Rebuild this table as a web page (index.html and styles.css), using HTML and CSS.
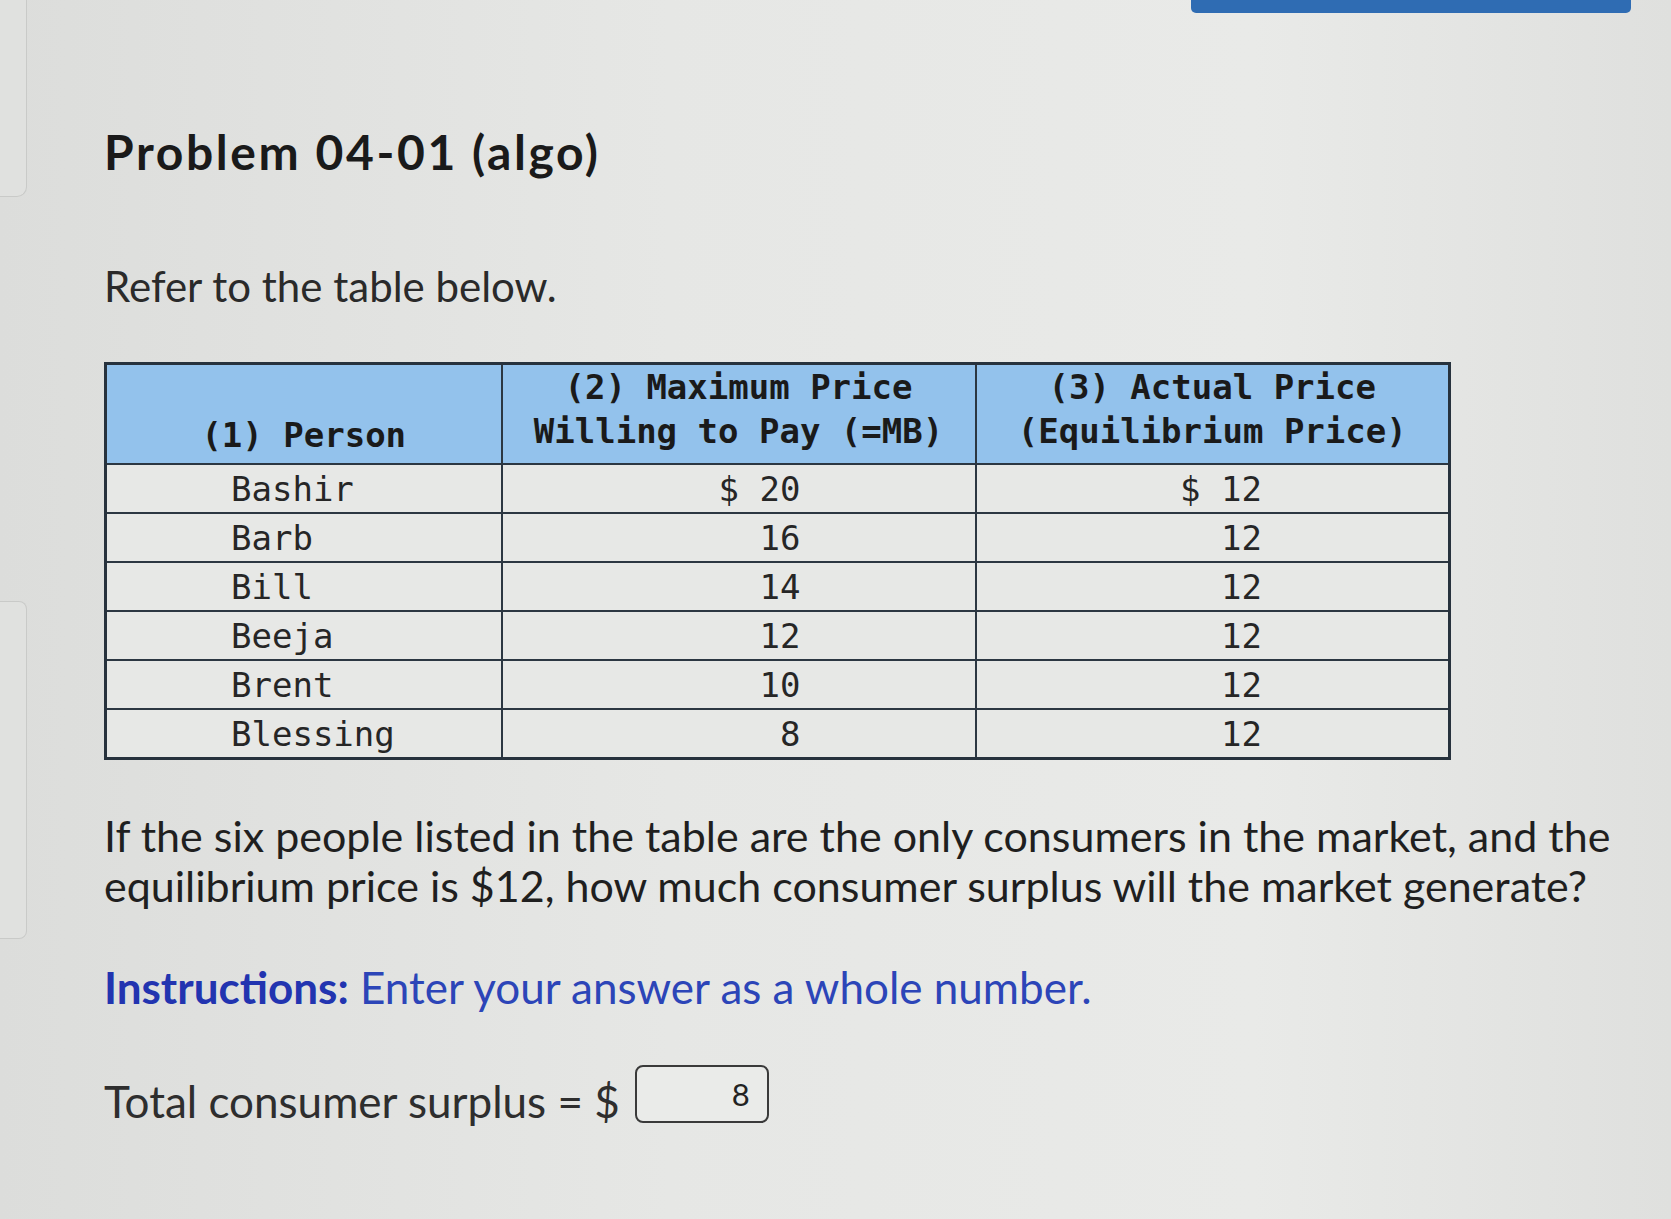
FILE: index.html
```html
<!DOCTYPE html>
<html lang="en">
<head>
<meta charset="utf-8">
<title>Problem 04-01 (algo)</title>
<link rel="stylesheet" href="styles.css">
</head>
<body>
<div class="page">
  <aside class="gutter">
    <div class="tab tab-top"></div>
    <div class="tab tab-mid"></div>
  </aside>
  <main class="content">
    <div class="topbar"><div class="bluebar"></div></div>
    <h1 class="title">Problem 04-01 (algo)</h1>
    <p class="lead">Refer to the table below.</p>
    <table class="data">
      <colgroup>
        <col class="c1"><col class="c2"><col class="c3">
      </colgroup>
      <thead>
        <tr>
          <th class="h1">(1) Person</th>
          <th class="h2">(2) Maximum Price<br>Willing to Pay (=MB)</th>
          <th class="h3">(3) Actual Price<br>(Equilibrium Price)</th>
        </tr>
      </thead>
      <tbody>
        <tr><td class="name">Bashir</td><td class="num n2">$ 20</td><td class="num n3">$ 12</td></tr>
        <tr><td class="name">Barb</td><td class="num n2">16</td><td class="num n3">12</td></tr>
        <tr><td class="name">Bill</td><td class="num n2">14</td><td class="num n3">12</td></tr>
        <tr><td class="name">Beeja</td><td class="num n2">12</td><td class="num n3">12</td></tr>
        <tr><td class="name">Brent</td><td class="num n2">10</td><td class="num n3">12</td></tr>
        <tr><td class="name">Blessing</td><td class="num n2">8</td><td class="num n3">12</td></tr>
      </tbody>
    </table>
    <p class="question">If the six people listed in the table are the only consumers in the market, and the<br>equilibrium price is $12, how much consumer surplus will the market generate?</p>
    <p class="instructions"><strong>Instructions:</strong> Enter your answer as a whole number.</p>
    <div class="answer">
      <span class="answer-label">Total consumer surplus = $</span>
      <span class="answer-box">8</span>
    </div>
  </main>
</div>
</body>
</html>
```

FILE: styles.css
```css
html, body {
  margin: 0;
  padding: 0;
}
body {
  background: #e3e4e2;
  font-family: "Lato", "Open Sans", sans-serif;
  color: #1c1c1c;
  width: 1671px;
  height: 1219px;
  overflow: hidden;
}
.page {
  display: flex;
  width: 1671px;
  min-height: 1219px;
  background: linear-gradient(90deg, #dcdddb 0%, #e6e7e5 40%, #e9eae8 75%, #dfe0de 100%);
}
.gutter {
  width: 27px;
  flex: none;
  display: flex;
  flex-direction: column;
}
.tab {
  border: 1px solid #c9cac8;
  border-left: none;
  background: #e0e1df;
}
.tab-top {
  height: 196px;
  border-top: none;
  border-bottom-right-radius: 10px;
}
.tab-mid {
  height: 336px;
  margin-top: 404px;
  border-top-right-radius: 8px;
  border-bottom-right-radius: 8px;
}
.content {
  flex: 1;
  padding-left: 77px;
}
.topbar {
  display: flex;
  justify-content: flex-end;
  height: 13px;
}
.bluebar {
  width: 440px;
  height: 13px;
  margin-right: 40px;
  background: #2f6cb3;
  border-bottom-left-radius: 5px;
  border-bottom-right-radius: 5px;
}
.title {
  margin: 110px 0 0;
  font-size: 48px;
  line-height: 58px;
  font-weight: 700;
  letter-spacing: 2.6px;
  color: #1a1a1a;
}
.lead {
  margin: 80px 0 0;
  font-size: 42px;
  line-height: 50px;
  color: #2a2a2a;
}
.data {
  margin-top: 51px;
  border-collapse: collapse;
  border: 3px solid #27323d;
  font-family: "DejaVu Sans Mono", monospace;
  font-size: 34px;
  color: #262626;
  table-layout: fixed;
  width: 1344px;
}
.c1 { width: 396px; }
.c2 { width: 474px; }
.c3 { width: 474px; }
.data th {
  background: #93c2ec;
  font-weight: 700;
  line-height: 44px;
  height: 92px;
  padding: 0;
  text-align: center;
  border: 2px solid #2c3742;
  color: #1a1a1a;
}
.data th.h1 {
  vertical-align: bottom;
  padding-bottom: 6px;
}
.data th.h2,
.data th.h3 {
  vertical-align: top;
  padding-top: 0;
}
.data td {
  height: 47px;
  padding: 0;
  line-height: 44px;
  border: 2px solid #2c3742;
  background: #e7e8e6;
  vertical-align: middle;
}
.data td.name {
  padding-left: 124px;
}
.data td.num {
  text-align: right;
}
.data td.n2 { padding-right: 174px; }
.data td.n3 { padding-right: 186px; }
.question {
  margin: 51px 0 0;
  font-size: 43px;
  line-height: 50px;
  color: #1f1f1f;
}
.instructions {
  margin: 50px 0 0;
  font-size: 44px;
  line-height: 53px;
  color: #2c45b8;
}
.instructions strong {
  color: #2234b0;
  font-weight: 700;
}
.answer {
  margin-top: 51px;
  display: flex;
  align-items: flex-start;
}
.answer-label {
  margin-top: 10px;
  font-size: 44px;
  line-height: 53px;
  color: #2e2e2e;
}
.answer-box {
  margin-left: 15px;
  width: 134px;
  height: 58px;
  box-sizing: border-box;
  border: 2px solid #3a3a3a;
  border-radius: 8px;
  background: #eaebe9;
  display: flex;
  align-items: center;
  justify-content: flex-end;
  padding-right: 17px;
  font-family: "Lato", sans-serif;
  font-size: 31px;
  color: #222;
}
```
